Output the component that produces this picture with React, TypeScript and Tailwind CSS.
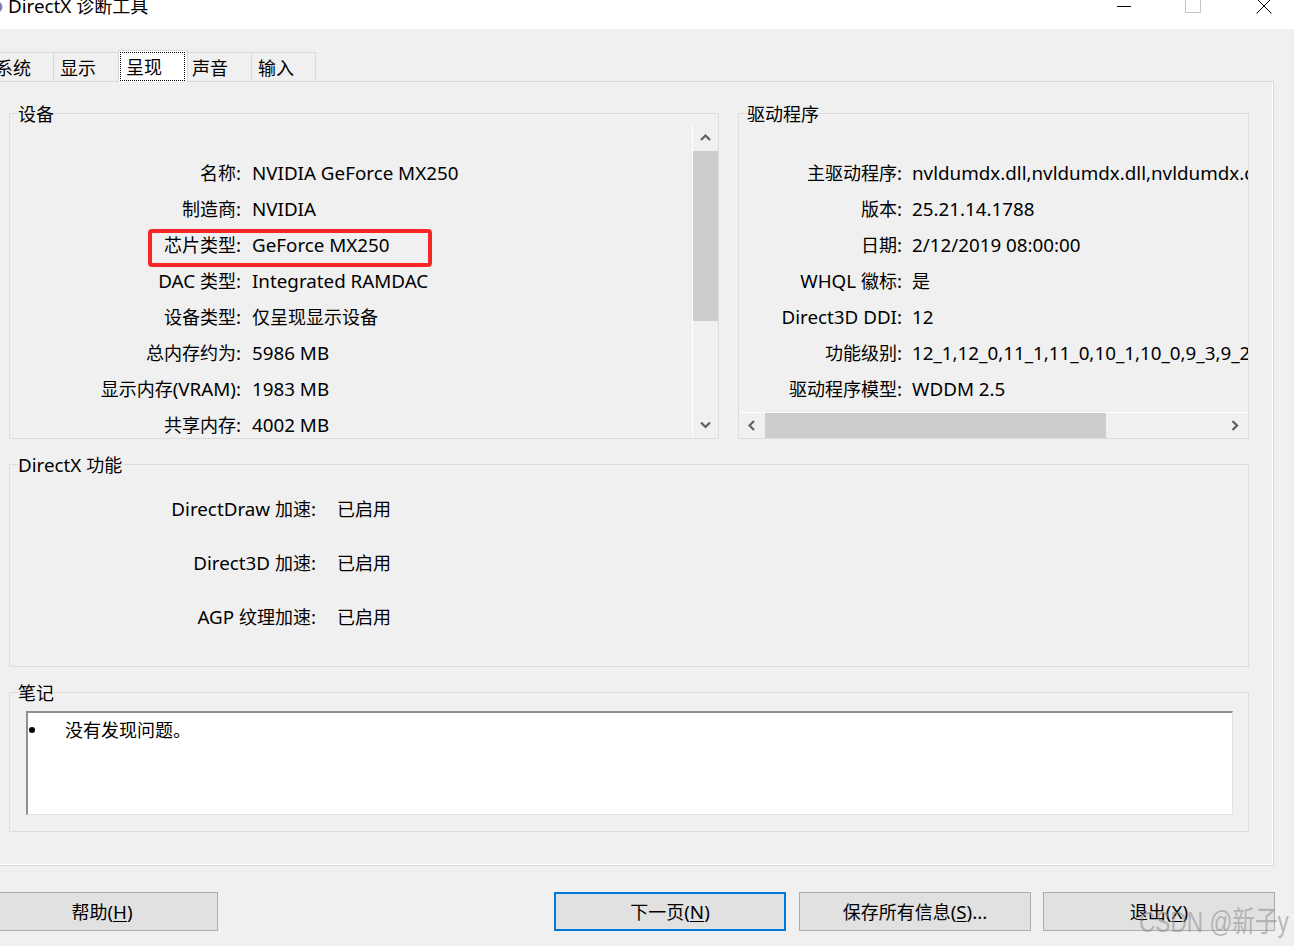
import React from "react";

type Dir = "up" | "down" | "left" | "right";

const Chevron = ({ dir }: { dir: Dir }) => {
  if (dir === "up" || dir === "down") {
    const pts = dir === "up" ? "1,6 5.5,1.5 10,6" : "1,1.5 5.5,6 10,1.5";
    return (
      <svg width="11" height="8" viewBox="0 0 11 8">
        <polyline points={pts} fill="none" stroke="#606060" strokeWidth="2.2" />
      </svg>
    );
  }
  const pts = dir === "left" ? "6,1 1.5,5.5 6,10" : "1.5,1 6,5.5 1.5,10";
  return (
    <svg width="8" height="11" viewBox="0 0 8 11">
      <polyline points={pts} fill="none" stroke="#606060" strokeWidth="2.2" />
    </svg>
  );
};

// Render CJK runs slightly smaller, as Microsoft YaHei UI does next to Segoe UI
const T = ({ s }: { s: string }) => {
  const parts = s.split(/([\u3000-\u9fff\uff00-\uffef]+)/);
  return (
    <>
      {parts.map((p, i) =>
        p === "" ? null : /[\u3000-\u9fff\uff00-\uffef]/.test(p) ? (
          <span key={i} className="text-[18px]">
            {p}
          </span>
        ) : (
          <span key={i}>{p}</span>
        )
      )}
    </>
  );
};

const leftRows: [string, string][] = [
  ["名称:", "NVIDIA GeForce MX250"],
  ["制造商:", "NVIDIA"],
  ["芯片类型:", "GeForce MX250"],
  ["DAC 类型:", "Integrated RAMDAC"],
  ["设备类型:", "仅呈现显示设备"],
  ["总内存约为:", "5986 MB"],
  ["显示内存(VRAM):", "1983 MB"],
  ["共享内存:", "4002 MB"],
];

const rightRows: [string, string][] = [
  ["主驱动程序:", "nvldumdx.dll,nvldumdx.dll,nvldumdx.dll,nvldumdx.dll"],
  ["版本:", "25.21.14.1788"],
  ["日期:", "2/12/2019 08:00:00"],
  ["WHQL 徽标:", "是"],
  ["Direct3D DDI:", "12"],
  ["功能级别:", "12_1,12_0,11_1,11_0,10_1,10_0,9_3,9_2,9_1"],
  ["驱动程序模型:", "WDDM 2.5"],
];

const dxRows: [string, string][] = [
  ["DirectDraw 加速:", "已启用"],
  ["Direct3D 加速:", "已启用"],
  ["AGP 纹理加速:", "已启用"],
];

const GroupTitle = ({ children }: { children: string }) => (
  <div className="-mt-[13px] ml-[8px] h-[26px] w-fit shrink-0 bg-[#f0f0f0] leading-[26px] whitespace-nowrap">
    <T s={children} />
  </div>
);

const Button = ({
  label,
  u,
  after,
  primary,
  className,
}: {
  label: string;
  u: string;
  after?: string;
  primary?: boolean;
  className?: string;
}) => (
  <div
    className={
      "flex h-[39px] w-[232px] shrink-0 items-center justify-center bg-[#e1e1e1] leading-[26px] whitespace-nowrap " +
      (primary ? "border-2 border-[#0078d7] " : "border border-[#adadad] ") +
      (className ?? "")
    }
  >
    <span>
      <span className="text-[18px]">{label}</span>(
      <span className="underline underline-offset-[2px]">{u}</span>){after ?? ""}
    </span>
  </div>
);

export default function App() {
  return (
    <div className="relative h-[946px] w-[1294px] overflow-hidden bg-[#f0f0f0] text-[18.8px] leading-[26px] text-black font-['Noto_Sans','Noto_Sans_CJK_SC',sans-serif]">
      {/* Title bar */}
      <div className="flex h-[29px] items-start overflow-hidden bg-white">
        <div className="-mt-[7px] flex items-center whitespace-nowrap">
          <svg width="14" height="14" viewBox="0 0 14 14" className="-ml-[11px] mr-[5px] mt-[2px]">
            <circle cx="7" cy="7" r="6" fill="#7a78c4" stroke="#8d8d8d" strokeWidth="1" />
          </svg>
          <span>
            <T s="DirectX 诊断工具" />
          </span>
        </div>
        <div className="ml-auto flex">
          <div className="flex h-[29px] w-[68px] justify-center">
            <svg width="16" height="16" viewBox="0 0 16 16" className="-mt-[2px]">
              <line x1="1" y1="8.5" x2="15" y2="8.5" stroke="#000" strokeWidth="1" />
            </svg>
          </div>
          <div className="flex h-[29px] w-[69px] justify-center">
            <svg width="16" height="16" viewBox="0 0 16 16" className="-mt-[3px]">
              <rect x="0.5" y="0.5" width="15" height="15" fill="none" stroke="#c6c6c6" strokeWidth="1" />
            </svg>
          </div>
          <div className="flex h-[29px] w-[67px] justify-center pl-[6px]">
            <svg width="16" height="16" viewBox="0 0 16 16" className="-mt-[2px]">
              <line x1="0.5" y1="0.5" x2="15.5" y2="15.5" stroke="#000" strokeWidth="1" />
              <line x1="15.5" y1="0.5" x2="0.5" y2="15.5" stroke="#000" strokeWidth="1" />
            </svg>
          </div>
        </div>
      </div>

      {/* Tabs */}
      <div className="relative z-10 -ml-[12px] flex h-[52px] items-end text-[18px]">
        <div className="h-[29px] w-[66px] border-t border-r border-l border-[#d9d9d9] pl-[6px] pt-[2px]">系统</div>
        <div className="h-[29px] w-[64px] border-t border-[#d9d9d9] pl-[6px] pt-[2px]">显示</div>
        <div className="-mb-[1px] h-[32px] w-[70px] border-t border-r border-l border-[#d9d9d9] bg-white p-[1px] pr-[2px]">
          <div className="h-[29px] border border-dotted border-black pl-[5px] pt-[1px]">呈现</div>
        </div>
        <div className="h-[29px] w-[64px] border-t border-r border-[#d9d9d9] pl-[4px] pt-[2px]">声音</div>
        <div className="h-[29px] w-[64px] border-t border-r border-[#d9d9d9] pl-[6px] pt-[2px]">输入</div>
      </div>

      {/* Panel */}
      <div className="-ml-[2px] h-[785px] w-[1276px] border border-[#d9d9d9] pl-[10px] pt-[31px] shadow-[inset_-1px_-1px_0_#ffffff]">
        {/* Top row */}
        <div className="flex gap-[19px]">
          {/* Device */}
          <div className="flex h-[326px] w-[710px] flex-col border border-[#dcdcdc]">
            <GroupTitle>设备</GroupTitle>
            <div className="-mt-[2px] flex h-[313px]">
              <div className="relative min-w-0 flex-1 overflow-hidden pt-[30px]">
                {leftRows.map(([k, v]) => (
                  <div key={k} className="flex h-[36px] items-center whitespace-nowrap">
                    <span className="w-[231px] shrink-0 text-right">
                      <T s={k} />
                    </span>
                    <span className="pl-[11px]">
                      <T s={v} />
                    </span>
                  </div>
                ))}
                <div className="absolute left-[138px] top-[104px] h-[38px] w-[284px] rounded-[4px] border-[4px] border-[#f82626]" />
              </div>
              <div className="flex w-[26px] shrink-0 flex-col border-l border-white">
                <div className="flex h-[26px] items-center justify-center">
                  <Chevron dir="up" />
                </div>
                <div className="h-[170px] bg-[#cdcdcd]" />
                <div className="flex-1" />
                <div className="flex h-[26px] items-center justify-center">
                  <Chevron dir="down" />
                </div>
              </div>
            </div>
          </div>

          {/* Driver */}
          <div className="flex h-[326px] w-[511px] flex-col border border-[#dcdcdc]">
            <GroupTitle>驱动程序</GroupTitle>
            <div className="-mt-[2px] flex h-[313px] flex-col">
              <div className="h-[287px] overflow-hidden pt-[30px]">
                {rightRows.map(([k, v]) => (
                  <div key={k} className="flex h-[36px] items-center whitespace-nowrap">
                    <span className="w-[163px] shrink-0 text-right">
                      <T s={k} />
                    </span>
                    <span className="pl-[10px]">
                      <T s={v} />
                    </span>
                  </div>
                ))}
              </div>
              <div className="flex h-[26px] border-t border-white">
                <div className="flex w-[26px] items-center justify-center">
                  <Chevron dir="left" />
                </div>
                <div className="w-[341px] bg-[#cdcdcd]" />
                <div className="flex-1" />
                <div className="flex w-[26px] items-center justify-center">
                  <Chevron dir="right" />
                </div>
              </div>
            </div>
          </div>
        </div>

        {/* DirectX features */}
        <div className="mt-[25px] flex h-[203px] w-[1240px] flex-col border border-[#dcdcdc]">
          <GroupTitle>DirectX 功能</GroupTitle>
          <div className="pt-[4px]">
            {dxRows.map(([k, v]) => (
              <div key={k} className="flex h-[54px] items-center whitespace-nowrap">
                <span className="w-[306px] shrink-0 text-right">
                  <T s={k} />
                </span>
                <span className="pl-[21px]">
                  <T s={v} />
                </span>
              </div>
            ))}
          </div>
        </div>

        {/* Notes */}
        <div className="mt-[25px] flex h-[140px] w-[1240px] flex-col border border-[#dcdcdc]">
          <GroupTitle>笔记</GroupTitle>
          <div className="ml-[16px] mt-[5px] h-[104px] w-[1207px] border-t-2 border-l-2 border-r border-b border-t-[#8f8f8f] border-l-[#8f8f8f] border-r-[#e3e3e3] border-b-[#e3e3e3] bg-white">
            <div className="mt-[4px] flex h-[26px] items-center whitespace-nowrap">
              <span className="flex w-[37px] shrink-0 pl-[1px]">
                <span className="h-[6px] w-[6px] rounded-full bg-black" />
              </span>
              <span className="text-[18px]">没有发现问题。</span>
            </div>
          </div>
        </div>
      </div>

      {/* Buttons */}
      <div className="-ml-[14px] mt-[26px] flex">
        <Button label="帮助" u="H" />
        <Button label="下一页" u="N" primary className="ml-[336px]" />
        <Button label="保存所有信息" u="S" after="..." className="ml-[13px]" />
        <Button label="退出" u="X" className="ml-[12px]" />
      </div>

      {/* Watermark */}
      <div className="pointer-events-none absolute left-[1139px] top-[908px] origin-left scale-x-[0.78] whitespace-nowrap text-[29px] leading-[29px] text-[#8a8a8a]/55 font-['Liberation_Sans','Noto_Sans_CJK_SC',sans-serif]">
        CSDN @新子y
      </div>
    </div>
  );
}
